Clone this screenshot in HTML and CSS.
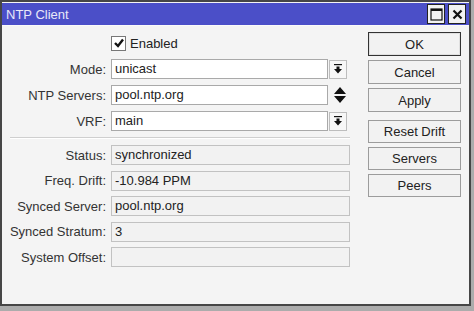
FILE: index.html
```html
<!DOCTYPE html>
<html lang="en">
<head>
    <meta charset="UTF-8">
    <title>NTP Client</title>
    <link rel="stylesheet" href="styles.css">
</head>
<body>
    <div class="window">
        <div class="titlebar">
            <span class="title">NTP Client</span>
            <span class="tb-btn">
                <svg width="13" height="13" viewBox="0 0 13 13"><rect x="1" y="1" width="11" height="11" fill="none" stroke="#111" stroke-width="1.2"/><rect x="1" y="1" width="11" height="2" fill="#111"/></svg>
            </span>
            <span class="tb-btn">
                <svg width="13" height="13" viewBox="0 0 13 13"><path d="M2.5 2.5 L10.5 10.5 M10.5 2.5 L2.5 10.5" stroke="#111" stroke-width="2.2"/></svg>
            </span>
        </div>

        <div class="content">
            <div class="form">
                <div class="row">
                    <span class="label"></span>
                    <label class="check">
                        <span class="box">
                            <svg width="12" height="12" viewBox="0 0 12 12"><path d="M2 6 L5 9 L10 2.5" fill="none" stroke="#111" stroke-width="2.4"/></svg>
                        </span>
                        Enabled
                    </label>
                </div>
                <div class="row">
                    <span class="label">Mode:</span>
                    <div class="field-wrap">
                        <div class="input">unicast</div>
                        <span class="drop">
                            <svg width="12" height="12" viewBox="0 0 12 12"><rect x="2" y="1" width="8" height="1.2" fill="#111"/><path d="M4.5 3.5 H7.5 V6 H10 L6 10.5 L2 6 H4.5 Z" fill="#111"/></svg>
                        </span>
                    </div>
                </div>
                <div class="row">
                    <span class="label">NTP Servers:</span>
                    <div class="field-wrap">
                        <div class="input">pool.ntp.org</div>
                        <span class="updown">
                            <svg width="14" height="18" viewBox="0 0 14 18"><path d="M7 1 L13 8 H1 Z M1 10 H13 L7 17 Z" fill="#111"/></svg>
                        </span>
                    </div>
                </div>
                <div class="row">
                    <span class="label">VRF:</span>
                    <div class="field-wrap">
                        <div class="input">main</div>
                        <span class="drop">
                            <svg width="12" height="12" viewBox="0 0 12 12"><rect x="2" y="1" width="8" height="1.2" fill="#111"/><path d="M4.5 3.5 H7.5 V6 H10 L6 10.5 L2 6 H4.5 Z" fill="#111"/></svg>
                        </span>
                    </div>
                </div>

                <div class="separator"></div>

                <div class="status">
                    <div class="row">
                        <span class="label">Status:</span>
                        <div class="readonly">synchronized</div>
                    </div>
                    <div class="row">
                        <span class="label">Freq. Drift:</span>
                        <div class="readonly">-10.984 PPM</div>
                    </div>
                    <div class="row">
                        <span class="label">Synced Server:</span>
                        <div class="readonly">pool.ntp.org</div>
                    </div>
                    <div class="row">
                        <span class="label">Synced Stratum:</span>
                        <div class="readonly">3</div>
                    </div>
                    <div class="row">
                        <span class="label">System Offset:</span>
                        <div class="readonly"></div>
                    </div>
                </div>
            </div>

            <div class="buttons">
                <button class="btn default">OK</button>
                <button class="btn">Cancel</button>
                <button class="btn">Apply</button>
                <button class="btn small first">Reset Drift</button>
                <button class="btn small">Servers</button>
                <button class="btn small">Peers</button>
            </div>
        </div>
    </div>
</body>
</html>
```

FILE: styles.css
```css
body {
    margin: 0;
    background: #acacac;
    font-family: "Liberation Sans", Arial, sans-serif;
    font-size: 13px;
    color: #222;
}

.window {
    width: 471px;
    height: 306px;
    box-sizing: border-box;
    border: 2px solid #464646;
    background: #f4f4f4;
}

.titlebar {
    height: 22px;
    margin-top: 1px;
    background: #4b4fc8;
    display: flex;
    align-items: center;
    padding-left: 4px;
    padding-right: 3px;
    border-bottom: 1px solid #fafafa;
}

.title {
    flex: 1;
    color: #e8e8f8;
    font-size: 13px;
}

.tb-btn {
    width: 16px;
    height: 18px;
    background: #f2f2f2;
    border: 1px solid #222;
    margin-left: 3px;
    display: flex;
    align-items: center;
    justify-content: center;
}

.content {
    display: flex;
    padding-top: 6px;
}

.form {
    width: 348px;
    display: flex;
    flex-direction: column;
    gap: 6px;
    padding-top: 1px;
}

.row {
    display: grid;
    grid-template-columns: 104px 1fr;
    column-gap: 5px;
    align-items: center;
    height: 20px;
}

.label {
    text-align: right;
    color: #333;
}

.check {
    display: flex;
    align-items: center;
    gap: 4px;
    color: #222;
}

.box {
    width: 13px;
    height: 13px;
    border: 1px solid #777;
    background: #fff;
    display: flex;
    align-items: center;
    justify-content: center;
}

.field-wrap {
    display: flex;
    align-items: center;
    height: 20px;
}

.input {
    width: 217px;
    height: 20px;
    box-sizing: border-box;
    border: 1px solid #a9a9a9;
    background: #fff;
    padding: 0 3px;
    line-height: 18px;
}

.drop {
    width: 18px;
    height: 19px;
    box-sizing: border-box;
    margin-left: 1px;
    border: 1px solid #bdbdbd;
    background: #f7f7f7;
    display: flex;
    align-items: center;
    justify-content: center;
}

.updown {
    width: 18px;
    height: 20px;
    margin-left: 3px;
    display: flex;
    align-items: center;
    justify-content: center;
}

.separator {
    height: 1px;
    background: #cfcfcf;
    border-bottom: 1px solid #fff;
    margin: 0 0 0 8px;
}

.status {
    display: flex;
    flex-direction: column;
    gap: 5.5px;
}

.readonly {
    width: 239px;
    height: 20px;
    box-sizing: border-box;
    border: 1px solid #c2c2c2;
    background: #f2f2f2;
    padding: 0 3px;
    line-height: 18px;
}

.buttons {
    margin-left: 18px;
    display: flex;
    flex-direction: column;
    gap: 4px;
}

.btn {
    width: 93px;
    height: 24px;
    font-family: "Liberation Sans", Arial, sans-serif;
    font-size: 13px;
    color: #222;
    background: #f2f2f2;
    border: 1px solid #9c9c9c;
    padding: 0;
}

.btn.default {
    border: 1px solid #333;
    box-shadow: inset 0 0 0 1px #e0e0e0;
}

.btn.small {
    height: 23px;
}

.btn.first {
    margin-top: 4px;
}
```
